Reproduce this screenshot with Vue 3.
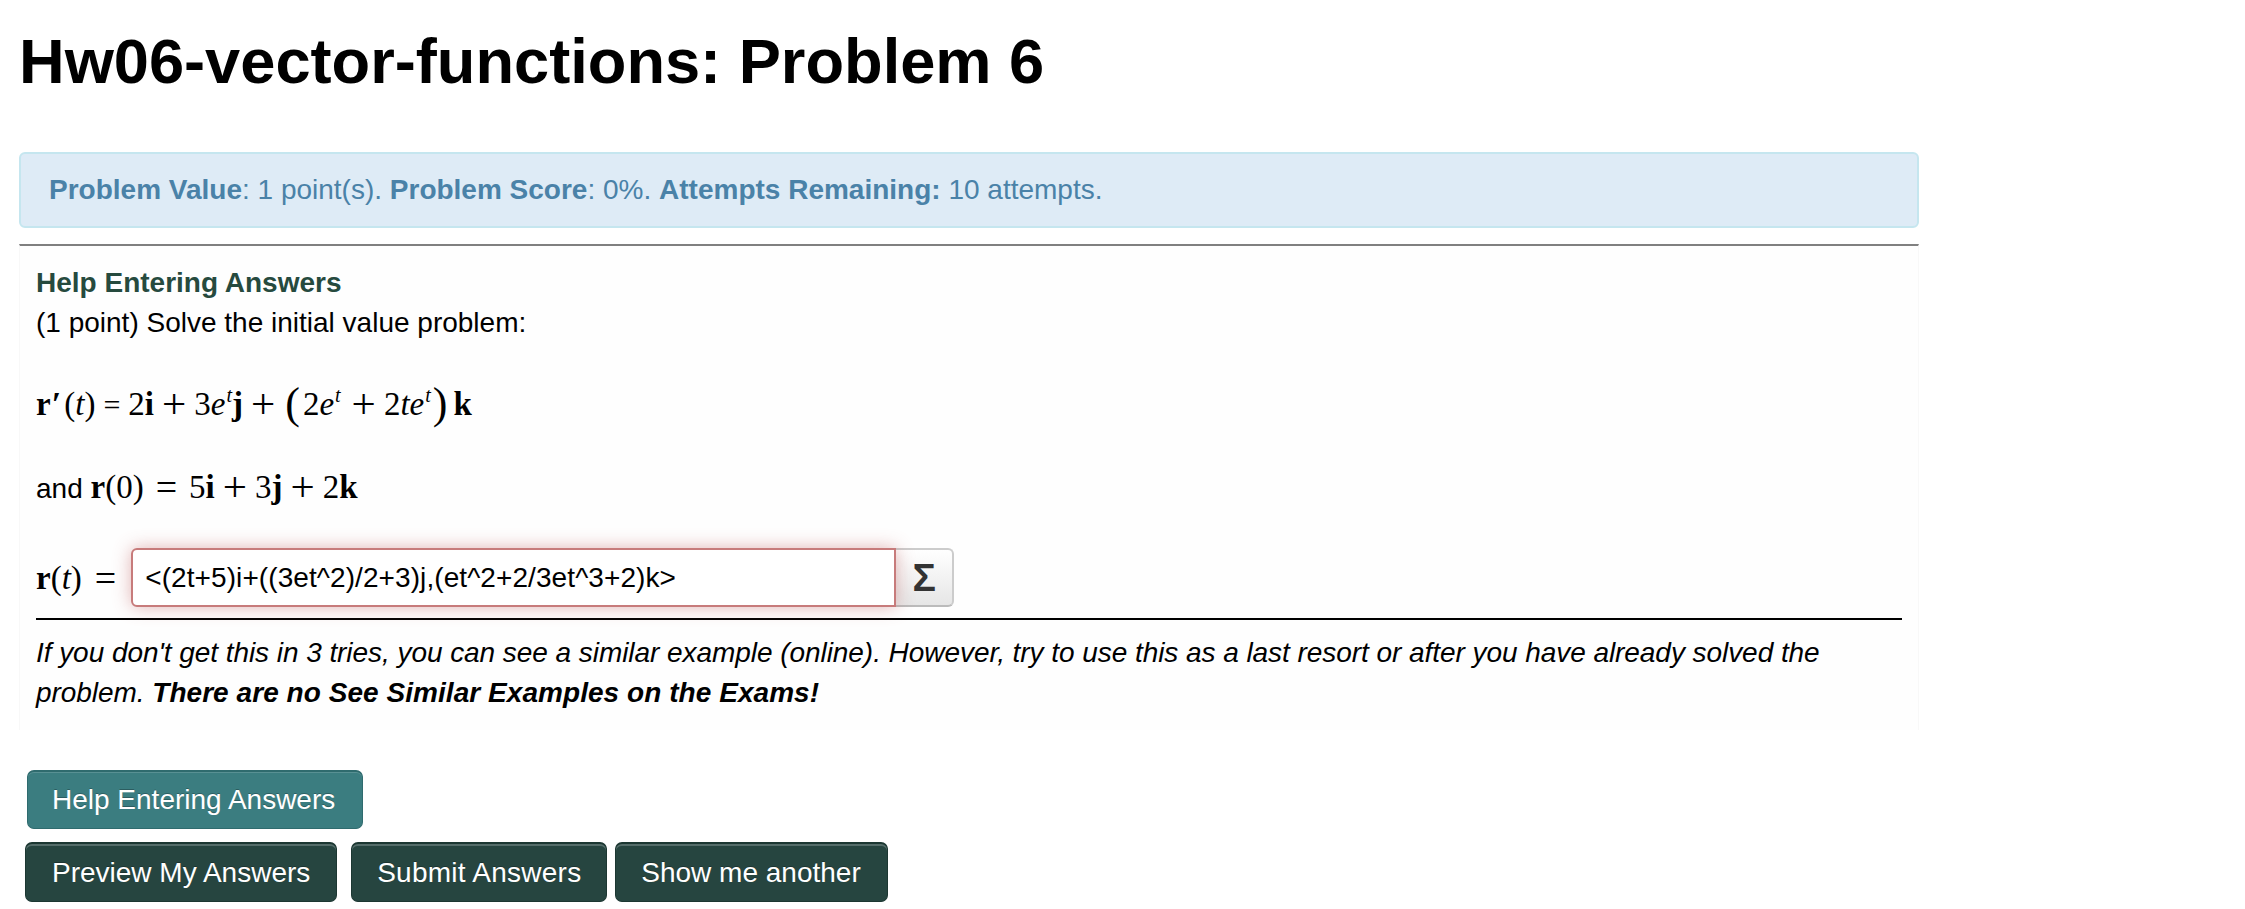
<script setup>
const answer = '<(2t+5)i+((3et^2)/2+3)j,(et^2+2/3et^3+2)k>'
</script>

<template>
  <main class="page">
    <h1 class="title">Hw06-vector-functions: Problem 6</h1>
    <div class="alert">
      <b>Problem Value</b>: 1 point(s). <b>Problem Score</b>: 0%. <b>Attempts Remaining:</b> 10 attempts.
    </div>
    <section class="problem">
      <a class="help-link">Help Entering Answers</a>
      <p class="intro">(1 point) Solve the initial value problem:</p>
      <p class="math eq1"><b>r</b><b class="prime">′</b><span class="gap-l">(</span><i>t</i>)<span class="plain-eq">=</span>2<b>i</b><span class="op">+</span>3<i>e</i><sup><i>t</i></sup><b>j</b><span class="op before-paren">+</span><span class="paren open">(</span>2<i>e</i><sup><i>t</i></sup><span class="op wide">+</span>2<i>te</i><sup><i>t</i></sup><span class="paren close">)</span><b class="gap-k">k</b></p>
      <p class="line2">and <span class="math"><b>r</b>(0)<span class="eq">=</span>5<b>i</b><span class="op">+</span>3<b>j</b><span class="op">+</span>2<b>k</b></span></p>
      <div class="answer-row">
        <span class="math"><b>r</b>(<i>t</i>)<span class="eq tail">=</span></span>
        <div class="input-group">
          <input class="answer" type="text" :value="answer" readonly />
          <button class="sigma" type="button">Σ</button>
        </div>
      </div>
      <hr class="rule" />
      <p class="note">If you don't get this in 3 tries, you can see a similar example (online). However, try to use this as a last resort or after you have already solved the problem. <b>There are no See Similar Examples on the Exams!</b></p>
    </section>
    <div class="actions">
      <div class="row help-row"><button class="btn teal" type="button">Help Entering Answers</button></div>
      <div class="row">
        <button class="btn dark preview" type="button">Preview My Answers</button>
        <button class="btn dark submit" type="button">Submit Answers</button>
        <button class="btn dark show" type="button">Show me another</button>
      </div>
    </div>
  </main>
</template>

<style>
body { background: #fff; }
</style>

<style scoped>
.page {
  width: 1900px;
  height: 909px;
  overflow: hidden;
  padding-left: 19px;
  font-family: "Liberation Sans", Arial, sans-serif;
  font-size: 28px;
  line-height: 40px;
  color: #000;
}
.title {
  margin: 0;
  padding-top: 26px;
  height: 152px;
  box-sizing: border-box;
  font-size: 63.2px;
  line-height: 70px;
  font-weight: 700;
}
.alert {
  box-sizing: border-box;
  height: 76px;
  padding: 0 28px;
  line-height: 72px;
  background: #deebf6;
  border: 2px solid #c5e6ef;
  border-radius: 6px;
  color: #4a82a8;
}
.problem {
  box-sizing: border-box;
  margin-top: 16px;
  height: 486px;
  border-top: 2px solid #808080;
  border-left: 1px solid #f8f8f8;
  border-right: 1px solid #f8f8f8;
  background: #fefefe;
  padding: 17px 16px 0;
}
.help-link { display: block; font-weight: 700; color: #264a3e; }
.intro { margin: 0; }
.math { font-family: "Liberation Serif", "Times New Roman", serif; font-size: 33px; }
.eq1 { margin: 38px 0 0; height: 46px; line-height: 46px; white-space: nowrap; }
.prime { font-size: 34px; margin-left: 1px; }
.gap-l { margin-left: 3px; }
.plain-eq { font-size: 30px; margin: 0 8px; }
.op { font-size: 43px; line-height: 0; vertical-align: -3px; margin: 0 8px; }
.before-paren { margin-right: 10px; }
.wide { margin: 0 8px 0 11px; }
.eq { font-size: 38px; line-height: 0; vertical-align: -2px; margin: 0 12px; }
.tail { margin-left: 13px; margin-right: 0; }
.paren { font-size: 44px; line-height: 0; vertical-align: -3px; }
.open { margin-right: 3px; }
.close { margin-left: 2px; }
.gap-k { margin-left: 6px; }
sup { font-size: 20px; line-height: 0; vertical-align: 13px; margin-left: 1px; }
.line2 { margin: 40px 0 0; }
.answer-row { margin-top: 39px; display: flex; align-items: center; gap: 15px; }
.input-group { display: flex; }
.answer {
  box-sizing: border-box;
  width: 765px;
  height: 59px;
  padding: 0 12px;
  border: 2px solid #c77b7b;
  border-radius: 6px 0 0 6px;
  background: #fff;
  font: 28px "Liberation Sans", Arial, sans-serif;
  letter-spacing: 0.08px;
  color: #000;
  box-shadow: 0 0 18px rgba(190, 90, 90, 0.45);
  outline: none;
  position: relative;
}
.sigma {
  box-sizing: border-box;
  width: 58px;
  height: 59px;
  border: 2px solid #ccc;
  border-bottom-color: #bbb;
  border-left: 0;
  border-radius: 0 6px 6px 0;
  background: linear-gradient(#fff, #e6e6e6);
  font: 700 39px "Liberation Sans", sans-serif;
  color: #333;
  padding: 0;
}
.rule { margin: 11px 0 0; border: 0; border-top: 2px solid #000; }
.note { margin: 13px 0 0; font-style: italic; letter-spacing: -0.055px; }
.note b { letter-spacing: 0.05px; }
.actions { margin-top: 40px; display: flex; flex-direction: column; gap: 13px; }
.row { display: flex; gap: 8px; padding-left: 6px; }
.help-row { padding-left: 8px; }
.btn {
  height: 60px;
  padding: 0 25px;
  border-radius: 7px;
  font: 28px "Liberation Sans", Arial, sans-serif;
  color: #fff;
  text-shadow: 0 -1px 0 rgba(0, 0, 0, .25);
}
.teal { height: 59px; padding: 0 27px 0 24px; background: #3b7d80; border: 1px solid #2f6b6e; border-top-width: 2px; box-shadow: inset 0 1px 0 rgba(255,255,255,.15); }
.dark { background: #264540; border: 1px solid #1c3732; border-top-width: 2px; box-shadow: inset 0 2px 0 rgba(255,255,255,.22); }
.preview { margin-right: 6px; padding: 0 26px; }
.submit { width: 256px; padding: 0; letter-spacing: 0.25px; }
.show { padding: 0 26px 0 25px; }
</style>
